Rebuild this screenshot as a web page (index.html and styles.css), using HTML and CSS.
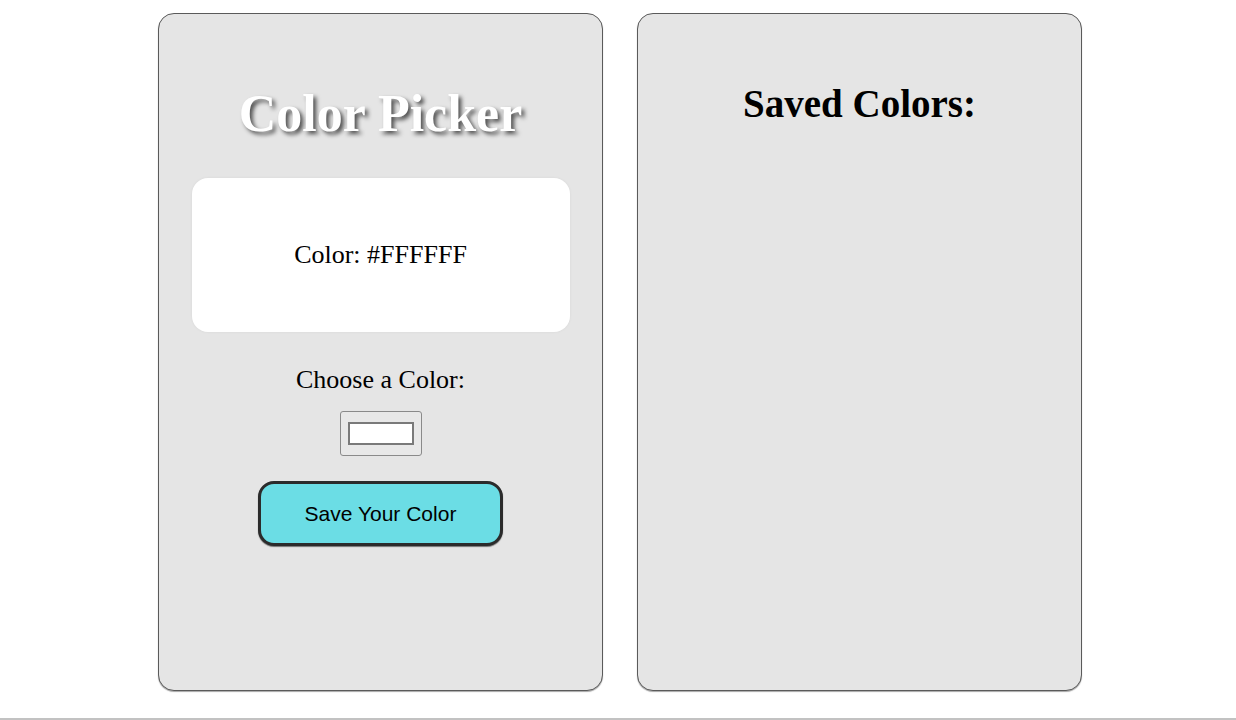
FILE: index.html
```html
<!DOCTYPE html>
<html lang="en">
<head>
<meta charset="utf-8">
<title>Color Picker</title>
<link rel="stylesheet" href="styles.css">
</head>
<body>
<main class="page">
  <section class="card picker">
    <h1 class="title">Color Picker</h1>
    <div class="preview"><p class="preview-text">Color: #FFFFFF</p></div>
    <label class="choose" for="color">Choose a Color:</label>
    <input class="color-input" id="color" type="color" value="#ffffff">
    <button class="save" type="button">Save Your Color</button>
  </section>
  <section class="card saved">
    <h2 class="saved-title">Saved Colors:</h2>
  </section>
</main>
<div class="bottom-line"></div>
</body>
</html>
```
FILE: styles.css
```css
* { box-sizing: border-box; }
html, body { margin: 0; padding: 0; }
body {
  background: #ffffff;
  font-family: "Liberation Serif", "Times New Roman", serif;
  color: #000;
  height: 720px;
  display: flex;
  flex-direction: column;
}
.page {
  height: 718px;
  display: flex;
  justify-content: center;
  align-items: flex-start;
  gap: 34px;
  padding-top: 13px;
  padding-left: 4px;
}
.card {
  width: 445px;
  height: 678px;
  background: #e5e5e5;
  border: 1px solid #5a5a5a;
  border-radius: 16px;
  box-shadow: 0 1px 1px rgba(0,0,0,0.35);
  display: flex;
  flex-direction: column;
  align-items: center;
}
.title {
  margin: 74px 0 0;
  font-size: 52px;
  line-height: 1;
  font-weight: bold;
  color: #ffffff;
  text-shadow: 3px 3px 4px rgba(0,0,0,0.65);
}
.preview {
  margin-top: 38px;
  width: 378px;
  height: 154px;
  background: #ffffff;
  border-radius: 16px;
  box-shadow: 0 0 3px rgba(0,0,0,0.06);
  display: flex;
  align-items: center;
  justify-content: center;
}
.preview-text {
  margin: 0;
  font-size: 26px;
  line-height: 1;
}
.choose {
  margin-top: 35px;
  font-size: 26px;
  line-height: 1;
}
.color-input {
  -webkit-appearance: none;
  appearance: none;
  margin: 18px 0 0;
  width: 82px;
  height: 45px;
  padding: 0;
  border: 1px solid #8a8a8a;
  border-radius: 3px;
  background: #e8e8e8;
  cursor: pointer;
}
.color-input::-webkit-color-swatch-wrapper {
  padding: 10px 7px;
}
.color-input::-webkit-color-swatch {
  border: 2px solid #7a7a7a;
  border-radius: 0;
}
.save {
  margin-top: 25px;
  width: 245px;
  height: 65px;
  background: #6bdde5;
  border: 3px solid #2b2b2b;
  border-radius: 16px;
  box-shadow: 0 1px 1px rgba(0,0,0,0.5);
  font-family: "Liberation Sans", Arial, sans-serif;
  font-size: 21px;
  color: #000;
  cursor: pointer;
}
.saved-title {
  margin: 70px 0 0;
  font-size: 39px;
  line-height: 1;
  font-weight: bold;
}
.bottom-line {
  height: 2px;
  background: #c2c2c2;
}
```
